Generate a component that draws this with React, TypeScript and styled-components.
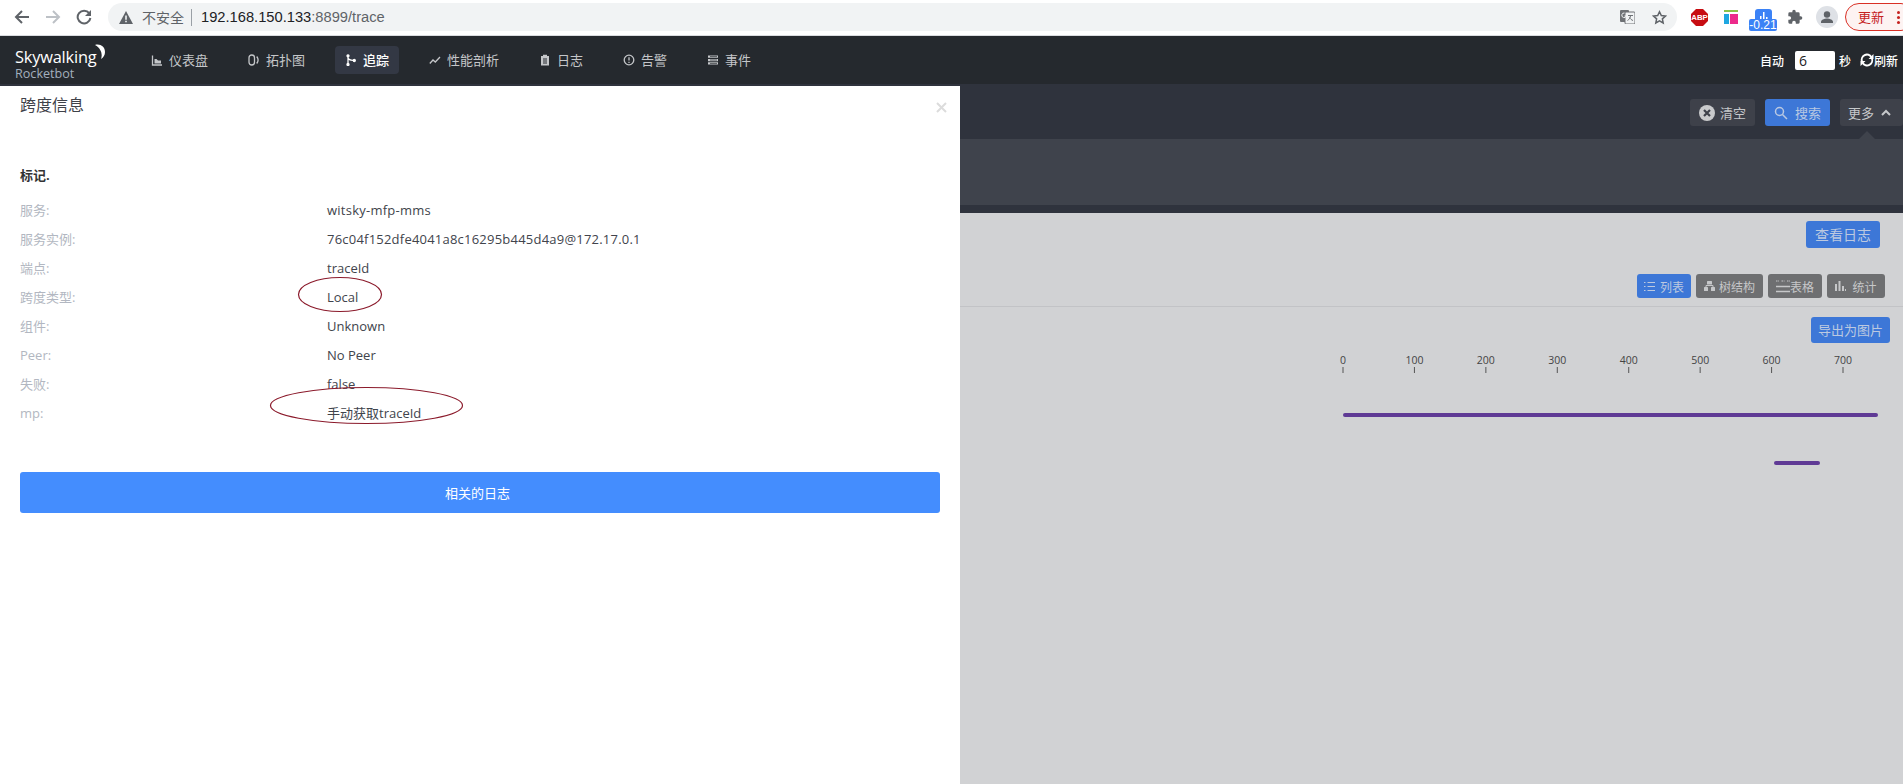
import React from "react";
import styled, { createGlobalStyle } from "styled-components";

const FONT = `"Open Sans", "Noto Sans CJK SC", sans-serif`;

const Global = createGlobalStyle`
  html, body { margin: 0; padding: 0; height: 784px; overflow: hidden; background: #d1d2d4; }
  body { font-family: ${FONT}; font-size: 13px; }
  #root { height: 784px; }
  * { box-sizing: border-box; }
`;

const Page = styled.div`
  display: flex;
  flex-direction: column;
  height: 784px;
  overflow: hidden;
`;

/* ---------- browser chrome ---------- */
const ChromeBar = styled.div`
  flex: 0 0 36px;
  height: 36px;
  display: flex;
  align-items: flex-start;
  background: #fff;
  border-bottom: 1px solid #dadce0;
  padding-top: 3px;
  overflow: hidden;
`;
const NavButtons = styled.div`
  display: flex;
  flex: none;
  width: 108px;
  height: 28px;
  align-items: center;
  padding-left: 14px;
  gap: 15px;
`;
const AddressBar = styled.div`
  flex: none;
  width: 1569px;
  height: 28px;
  background: #f1f3f4;
  border-radius: 14px;
  display: flex;
  align-items: center;
  padding-left: 11px;
  position: relative;
`;
const Insecure = styled.span`
  color: #5f6368;
  font-size: 14px;
  line-height: 28px;
  margin-left: 9px;
  font-family: "Noto Sans CJK SC", sans-serif;
`;
const AddressSep = styled.span`
  width: 1px;
  height: 17px;
  background: #9aa0a6;
  margin: 0 9px 0 7px;
`;
const Url = styled.span`
  font-family: "Liberation Sans", sans-serif;
  font-size: 14.7px;
  color: #202124;
  line-height: 28px;
`;
const UrlPath = styled.span`
  color: #5f6368;
`;
const AddressIcons = styled.div`
  margin-left: auto;
  display: flex;
  align-items: center;
  gap: 17px;
  padding-right: 10px;
`;
const Extensions = styled.div`
  flex: none;
  display: flex;
  align-items: center;
  height: 28px;
  margin-left: 6px;
`;
const Ext = styled.div`
  width: 32px;
  height: 28px;
  display: flex;
  align-items: center;
  justify-content: center;
  position: relative;
`;
const Badge = styled.span`
  position: absolute;
  left: 2px;
  top: 16px;
  width: 28px;
  height: 12px;
  background: #3b82f6;
  color: #fff;
  font-family: "Liberation Sans", sans-serif;
  font-size: 12px;
  line-height: 12px;
  text-align: center;
  border-radius: 2px;
`;
const UpdatePill = styled.div`
  margin-left: 2px;
  width: 70px;
  height: 28px;
  flex: none;
  border: 1px solid #d93025;
  border-radius: 14px;
  background: #fdf3f2;
  color: #c5221f;
  font-size: 13px;
  line-height: 26px;
  padding-left: 12px;
  position: relative;
  font-family: "Noto Sans CJK SC", sans-serif;
`;
const Dots = styled.span`
  position: absolute;
  left: 51px;
  top: 7px;
  width: 3px;
  height: 3px;
  border-radius: 50%;
  background: #c5221f;
  box-shadow: 0 5px 0 #c5221f, 0 10px 0 #c5221f;
`;

/* ---------- app nav ---------- */
const TopNav = styled.div`
  flex: 0 0 48px;
  height: 48px;
  background: #25292e;
  display: flex;
  align-items: flex-start;
  padding-top: 10px;
  color: #c8cacc;
`;
const Logo = styled.div`
  width: 141px;
  height: 38px;
  padding-left: 15px;
  margin-top: 1px;
  position: relative;
`;
const LogoTitle = styled.div`
  color: #fff;
  font-size: 16.4px;
  font-weight: 500;
  line-height: 19px;
  letter-spacing: -0.2px;
`;
const LogoSub = styled.div`
  color: #a3afbd;
  font-size: 12.6px;
  line-height: 14px;
  margin-top: 1px;
`;
const Moon = styled.svg`
  position: absolute;
  left: 94px;
  top: -3px;
`;
const NavList = styled.div`
  display: flex;
  gap: 20px;
`;
const NavItem = styled.div<{ $active?: boolean }>`
  height: 28px;
  display: flex;
  align-items: center;
  padding: 0 10px;
  gap: 6px;
  border-radius: 4px;
  font-size: 13px;
  line-height: 28px;
  color: ${(p) => (p.$active ? "#fff" : "#c4c6c9")};
  font-weight: ${(p) => (p.$active ? 500 : 400)};
  background: ${(p) => (p.$active ? "#333844" : "transparent")};
  font-family: "Noto Sans CJK SC", sans-serif;
`;
const NavRight = styled.div`
  margin-left: auto;
  height: 28px;
  display: flex;
  align-items: center;
  color: #fff;
  font-size: 12px;
  padding-right: 5px;
  margin-top: 0;
  font-family: "Noto Sans CJK SC", sans-serif;
  font-weight: 500;
`;
const IntervalInput = styled.input`
  width: 40px;
  height: 19px;
  margin: 0 4px 0 11px;
  padding: 0 4px;
  border: 0;
  border-radius: 2px;
  background: #fff;
  color: #222;
  font-family: ${FONT};
  font-size: 14px;
`;
const RefreshWrap = styled.span`
  display: flex;
  align-items: center;
  margin-left: 9px;
`;

/* ---------- main ---------- */
const Main = styled.div`
  flex: 1;
  position: relative;
  display: flex;
  flex-direction: column;
  background: #d1d2d4;
  overflow: hidden;
`;
const SubHeader = styled.div`
  flex: 0 0 55px;
  background: #2f333d;
  display: flex;
  justify-content: flex-end;
  align-items: flex-start;
  padding-top: 15px;
  gap: 10px;
  margin-right: 0;
  position: relative;
`;
const DarkButton = styled.div<{ $blue?: boolean; $w: number; $gap?: number; $pl?: number }>`
  width: ${(p) => p.$w}px;
  height: 27px;
  display: flex;
  align-items: center;
  gap: ${(p) => p.$gap ?? 5}px;
  padding-left: ${(p) => p.$pl ?? 9}px;
  border-radius: 3px;
  font-size: 13px;
  line-height: 27px;
  font-family: "Noto Sans CJK SC", sans-serif;
  background: ${(p) => (p.$blue ? "#3d77d7" : "#3e414a")};
  color: ${(p) => (p.$blue ? "#b9c8e2" : "#c6c8cb")};
`;
const Notch = styled.span`
  position: absolute;
  left: 1859px;
  top: 47px;
  width: 0;
  height: 0;
  border-left: 8px solid transparent;
  border-right: 8px solid transparent;
  border-bottom: 8px solid #3f434c;
`;
const MorePanel = styled.div`
  flex: 0 0 66px;
  background: #3f434c;
`;
const Band = styled.div`
  flex: 0 0 8px;
  background: #2f333d;
`;
const Content = styled.div`
  flex: 1;
  display: flex;
  flex-direction: column;
  align-items: flex-end;
  background: #d1d2d4;
`;
const BlueAction = styled.div<{ $w: number; $h: number; $mt: number; $mr: number; $fs: number }>`
  width: ${(p) => p.$w}px;
  height: ${(p) => p.$h}px;
  margin-top: ${(p) => p.$mt}px;
  margin-right: ${(p) => p.$mr}px;
  background: #3d77d7;
  color: #bcc9e0;
  border-radius: 3px;
  font-family: "Noto Sans CJK SC", sans-serif;
  font-size: ${(p) => p.$fs}px;
  line-height: ${(p) => p.$h}px;
  text-align: center;
`;
const ViewTabs = styled.div`
  display: flex;
  gap: 5px;
  margin-top: 26px;
  margin-right: 18px;
`;
const ViewTab = styled.div<{ $active?: boolean; $w: number; $gap: number }>`
  width: ${(p) => p.$w}px;
  height: 24px;
  border-radius: 3px;
  display: flex;
  align-items: center;
  justify-content: center;
  gap: ${(p) => p.$gap}px;
  background: ${(p) => (p.$active ? "#3d77d7" : "#6e6f71")};
  color: ${(p) => (p.$active ? "#bcc9e0" : "#c6c7c9")};
  font-size: 12px;
  font-family: "Noto Sans CJK SC", sans-serif;
`;
const Divider = styled.div`
  align-self: stretch;
  height: 1px;
  background: #c2c3c6;
  margin-top: 8px;
`;
const Chart = styled.svg`
  margin-top: 6px;
  flex: none;
`;

/* ---------- drawer ---------- */
const Drawer = styled.aside`
  position: absolute;
  left: 0;
  top: 2px;
  bottom: 0;
  width: 960px;
  background: #fff;
  padding: 6px 20px 0;
  color: #3d4048;
`;
const DrawerTitle = styled.h2`
  margin: 0;
  font-size: 16px;
  font-weight: 400;
  line-height: 24px;
  color: #3f4249;
  font-family: "Noto Sans CJK SC", sans-serif;
`;
const CloseIcon = styled.svg`
  position: absolute;
  right: 13px;
  top: 16px;
`;
const SectionTitle = styled.h3`
  margin: 49px 0 11px;
  font-size: 13px;
  font-weight: 700;
  line-height: 20px;
  color: #333;
`;
const Row = styled.div`
  display: grid;
  grid-template-columns: 307px 1fr;
  height: 29px;
  line-height: 29px;
  font-size: 13px;
`;
const RowLabel = styled.span`
  color: #b2b7c1;
`;
const RowValue = styled.span<{ $track: number }>`
  color: #41444c;
  letter-spacing: ${(p) => p.$track}px;
`;
const LogsButton = styled.div`
  margin-top: 44px;
  height: 41px;
  padding-right: 5px;
  background: #448dfe;
  border-radius: 3px;
  color: #fff;
  font-size: 13px;
  line-height: 41px;
  text-align: center;
  font-family: "Noto Sans CJK SC", sans-serif;
`;
const Circle = styled.svg<{ $left: number; $top: number }>`
  position: absolute;
  left: ${(p) => p.$left}px;
  top: ${(p) => p.$top}px;
  overflow: visible;
`;

/* ---------- icons ---------- */
const Back = () => (
  <svg width="16" height="16" viewBox="0 0 16 16" fill="none" stroke="#5f6368" strokeWidth="2">
    <path d="M15 8H2M8 2 2 8l6 6" />
  </svg>
);
const Forward = () => (
  <svg width="16" height="16" viewBox="0 0 16 16" fill="none" stroke="#bdc1c6" strokeWidth="2">
    <path d="M1 8h13M8 2l6 6-6 6" />
  </svg>
);
const Reload = () => (
  <svg width="16" height="16" viewBox="0 0 16 16" fill="none">
    <path d="M13.2 4.2A6.4 6.4 0 1 0 14.4 9" stroke="#5f6368" strokeWidth="2" />
    <path d="M15 1v6H9z" fill="#5f6368" />
  </svg>
);
const Warn = () => (
  <svg width="14" height="13" viewBox="0 0 14 13">
    <path d="M7 0 14 13H0z" fill="#5f6368" />
    <path d="M6.2 4.5h1.6v4.2H6.2zM6.2 9.7h1.6v1.5H6.2z" fill="#f1f3f4" />
  </svg>
);
const Translate = () => (
  <svg width="15" height="14" viewBox="0 0 15 14">
    <rect x="0" y="0" width="9" height="12" rx="1" fill="#6e7175" />
    <rect x="5" y="2" width="10" height="12" rx="1" fill="#f1f3f4" stroke="#6e7175" />
    <path d="M8 5.5h5M10.5 5.5c0 2-1.2 4-3 5M9.5 7.5c.8 1.4 2 2.5 3.5 3" stroke="#6e7175" fill="none" />
    <path d="M4.5 3a2.3 2.3 0 1 0 1.8 3H4.5" stroke="#f1f3f4" fill="none" />
  </svg>
);
const Star = () => (
  <svg width="15" height="15" viewBox="0 0 24 24" fill="none" stroke="#5f6368" strokeWidth="2.4">
    <path d="m12 2.8 2.9 6.1 6.6.8-4.9 4.5 1.3 6.6L12 17.500l-5.900 3.300 1.300-6.600L2.500 9.700l6.600-.8z" />
  </svg>
);
const Abp = () => (
  <svg width="17" height="17" viewBox="0 0 17 17">
    <path d="M5 0h7l5 5v7l-5 5H5l-5-5V5z" fill="#c70d12" />
    <text x="8.500" y="11.300" textAnchor="middle" fontSize="7.800" fontWeight="700" fill="#fff" fontFamily="Liberation Sans">ABP</text>
  </svg>
);
const Tile = () => (
  <svg width="15" height="15" viewBox="0 0 15 15">
    <rect x="0" y="0" width="14" height="2" fill="#8bc34a" />
    <rect x="0" y="4" width="5" height="10" fill="#1ea7e1" />
    <rect x="6" y="4" width="8" height="10" fill="#ec2a8b" />
  </svg>
);
const Analytics = () => (
  <svg width="17" height="16" viewBox="0 0 17 16">
    <path d="M3 0h11a3 3 0 0 1 3 3v13H0V3a3 3 0 0 1 3-3z" fill="#3b82f6" />
    <path d="M5 7h1.500v4H5zM8 3h1.500v8H8zM11 8h1.500v3H11z" fill="#fff" />
  </svg>
);
const Puzzle = () => (
  <svg width="16" height="16" viewBox="0 0 24 24" fill="#5f6368">
    <path d="M20.500 11H19V7a2 2 0 0 0-2-2h-4V3.500a2.500 2.500 0 0 0-5 0V5H4a2 2 0 0 0-2 2v3.800h1.500a2.700 2.700 0 0 1 0 5.400H2V20a2 2 0 0 0 2 2h3.800v-1.500a2.700 2.700 0 0 1 5.400 0V22H17a2 2 0 0 0 2-2v-4h1.500a2.500 2.500 0 0 0 0-5z" />
  </svg>
);
const Avatar = () => (
  <svg width="22" height="22" viewBox="0 0 22 22">
    <circle cx="11" cy="11" r="11" fill="#dee1e6" />
    <circle cx="11" cy="8.500" r="3.200" fill="#5f6368" />
    <path d="M5 16c0-2.200 3.600-3.400 6-3.400s6 1.200 6 3.400v1H5z" fill="#5f6368" />
  </svg>
);
const N = ({ children }: { children: React.ReactNode }) => (
  <svg width="12" height="12" viewBox="0 0 12 12" fill="none" stroke="currentColor" strokeWidth="1.300">
    {children}
  </svg>
);
const IDash = () => (
  <N>
    <path d="M1.500 1.500v9.500H11" />
    <path d="M3.500 9.500V5h2l1.500 1.500h3v3z" fill="currentColor" stroke="none" />
  </N>
);
const ITopo = () => (
  <N>
    <rect x="1" y="1" width="5.500" height="10" rx="2.700" />
    <path d="M8.700 2.500c1.600 2 1.600 5 0 7" />
  </N>
);
const ITrace = () => (
  <N>
    <path d="M3 1.500v9M3 4c.5 1.500 2 2.200 5 2.400" />
    <circle cx="3" cy="1.800" r="1" fill="currentColor" />
    <circle cx="3" cy="10.500" r="1" fill="currentColor" />
    <circle cx="9.300" cy="6.500" r="1" fill="currentColor" />
  </N>
);
const IPerf = () => (
  <N>
    <path d="M.8 9.500 4 6l2.300 2L11 3" />
  </N>
);
const ILog = () => (
  <N>
    <path d="M4 .8h4v1.200h2v9.500H2V2h2z" fill="currentColor" stroke="none" />
    <path d="M4 5h4M4 7h4M4 9h4" stroke="#25292e" strokeWidth="1" />
  </N>
);
const IAlarm = () => (
  <N>
    <circle cx="6" cy="6" r="4.800" />
    <path d="M6 3.200v3.300M6 7.800v1.200" />
  </N>
);
const IEvent = () => (
  <N>
    <path d="M1 1.500h10v2.300H1zM1 4.900h10v2.300H1zM1 8.300h10v2.300H1z" fill="currentColor" stroke="none" />
    <path d="M3 2.600h7M3 6h7M3 9.400h7" stroke="#25292e" strokeWidth=".7" />
  </N>
);
const IRefresh = () => (
  <svg width="14" height="14" viewBox="0 0 14 14" fill="none" stroke="#fff" strokeWidth="1.900">
    <path d="M2 8.500A5.200 5.200 0 0 1 11.300 4M12 5.500A5.200 5.200 0 0 1 2.700 10" />
    <path d="M13.500 1v5h-5zM.5 13V8h5z" fill="#fff" stroke="none" />
  </svg>
);
const IClear = () => (
  <svg width="16" height="16" viewBox="0 0 16 16">
    <circle cx="8" cy="8" r="8" fill="#c9cacc" />
    <path d="m5 5 6 6M11 5l-6 6" stroke="#3e414a" strokeWidth="2.200" />
  </svg>
);
const ISearch = () => (
  <svg width="14" height="14" viewBox="0 0 14 14" fill="none" stroke="#b9c8e2" strokeWidth="1.500">
    <circle cx="5.500" cy="5.500" r="4" />
    <path d="m8.500 8.500 4.500 4.500" />
  </svg>
);
const IChevron = () => (
  <svg width="10" height="7" viewBox="0 0 10 7" fill="none" stroke="#c6c8cb" strokeWidth="2">
    <path d="m1 6 4-4 4 4" />
  </svg>
);
const IList = () => (
  <svg width="11" height="11" viewBox="0 0 11 11" stroke="currentColor" strokeWidth="1.200">
    <path d="M3.500 1.500H11M3.500 5.500H11M3.500 9.500H11M0 1.500h1.500M0 5.500h1.500M0 9.500h1.500" />
  </svg>
);
const ITree = () => (
  <svg width="11" height="10" viewBox="0 0 11 10" fill="currentColor">
    <rect x="3" y="0" width="5" height="3.500" rx=".5" />
    <rect x="0" y="6" width="4" height="4" rx=".5" />
    <rect x="7" y="6" width="4" height="4" rx=".5" />
    <path d="M2 6V4.500h7V6" fill="none" stroke="currentColor" />
  </svg>
);
const ITable = () => (
  <svg width="14" height="13" viewBox="0 0 14 13" stroke="currentColor">
    <path d="M0 1h3M5.500 1h3M11 1h3" strokeDasharray="1.500 .7" />
    <path d="M0 6.500h14M0 11.500h14" strokeWidth="1.500" />
  </svg>
);
const IStat = () => (
  <svg width="11" height="10" viewBox="0 0 11 10" fill="currentColor">
    <path d="M0 3h2v7H0zM3.500 0h2v10h-2zM7 5h2v5H7zM10 8h1v2h-1z" />
  </svg>
);

const rows: [string, string, number][] = [
  ["服务:", "witsky-mfp-mms", 0.25],
  ["服务实例:", "76c04f152dfe4041a8c16295b445d4a9@172.17.0.1", 0.22],
  ["端点:", "traceId", 0],
  ["跨度类型:", "Local", 0],
  ["组件:", "Unknown", 0],
  ["Peer:", "No Peer", 0],
  ["失败:", "false", 0],
  ["mp:", "手动获取traceId", 0],
];
const navItems: [React.ReactNode, string, boolean?][] = [
  [<IDash />, "仪表盘"],
  [<ITopo />, "拓扑图"],
  [<ITrace />, "追踪", true],
  [<IPerf />, "性能剖析"],
  [<ILog />, "日志"],
  [<IAlarm />, "告警"],
  [<IEvent />, "事件"],
];
const ticks = [0, 100, 200, 300, 400, 500, 600, 700];

export default function App() {
  return (
    <Page>
      <Global />
      <ChromeBar>
        <NavButtons>
          <Back />
          <Forward />
          <Reload />
        </NavButtons>
        <AddressBar>
          <Warn />
          <Insecure>不安全</Insecure>
          <AddressSep />
          <Url>
            192.168.150.133<UrlPath>:8899/trace</UrlPath>
          </Url>
          <AddressIcons>
            <Translate />
            <Star />
          </AddressIcons>
        </AddressBar>
        <Extensions>
          <Ext>
            <Abp />
          </Ext>
          <Ext>
            <Tile />
          </Ext>
          <Ext>
            <Analytics />
            <Badge>-0.21</Badge>
          </Ext>
          <Ext>
            <Puzzle />
          </Ext>
          <Ext>
            <Avatar />
          </Ext>
        </Extensions>
        <UpdatePill>
          更新
          <Dots />
        </UpdatePill>
      </ChromeBar>

      <TopNav>
        <Logo>
          <LogoTitle>Skywalking</LogoTitle>
          <LogoSub>Rocketbot</LogoSub>
          <Moon width="14" height="16" viewBox="0 0 14 16">
            <path d="M1 1c5-1.500 10 1.500 10 7 0 3-1.500 5.500-4 7 1.500-4 1-10-6-14z" fill="#fff" />
          </Moon>
        </Logo>
        <NavList>
          {navItems.map(([icon, label, active]) => (
            <NavItem key={label} $active={active}>
              {icon}
              {label}
            </NavItem>
          ))}
        </NavList>
        <NavRight>
          自动
          <IntervalInput defaultValue="6" />秒
          <RefreshWrap>
            <IRefresh />
            刷新
          </RefreshWrap>
        </NavRight>
      </TopNav>

      <Main>
        <SubHeader>
          <DarkButton $w={65}>
            <IClear />
            清空
          </DarkButton>
          <DarkButton $w={65} $blue $gap={7}>
            <ISearch />
            搜索
          </DarkButton>
          <DarkButton $w={63} $pl={8} $gap={7}>
            更多
            <IChevron />
          </DarkButton>
          <Notch />
        </SubHeader>
        <MorePanel />
        <Band />
        <Content>
          <BlueAction $w={74} $h={27} $mt={8} $mr={23} $fs={14}>
            查看日志
          </BlueAction>
          <ViewTabs>
            <ViewTab $active $w={54} $gap={5}>
              <IList />
              列表
            </ViewTab>
            <ViewTab $w={67} $gap={4}>
              <ITree />
              树结构
            </ViewTab>
            <ViewTab $w={54} $gap={0}>
              <ITable />
              表格
            </ViewTab>
            <ViewTab $w={58} $gap={6}>
              <IStat />
              统计
            </ViewTab>
          </ViewTabs>
          <Divider />
          <BlueAction $w={79} $h={26} $mt={10} $mr={13} $fs={13}>
            导出为图片
          </BlueAction>
          <Chart width="603" height="130" viewBox="1300 349 603 130">
            {ticks.map((t, i) => {
              const x = 1343 + i * 71.43;
              return (
                <g key={t}>
                  <text x={x} y={364} textAnchor="middle" fontSize="10.500" fill="#444" fontFamily="Open Sans">
                    {t}
                  </text>
                  <line x1={x} x2={x} y1={367} y2={373} stroke="#555" />
                </g>
              );
            })}
            <rect x="1343" y="413" width="535" height="4" rx="2" fill="#5f3a95" />
            <rect x="1774" y="461" width="46" height="4" rx="2" fill="#5f3a95" />
          </Chart>
        </Content>

        <Drawer>
          <DrawerTitle>跨度信息</DrawerTitle>
          <CloseIcon width="11" height="11" viewBox="0 0 11 11" stroke="#dcdcdc" strokeWidth="2">
            <path d="m1 1 9 9M10 1l-9 9" />
          </CloseIcon>
          <SectionTitle>标记.</SectionTitle>
          {rows.map(([k, v, track]) => (
            <Row key={k}>
              <RowLabel>{k}</RowLabel>
              <RowValue $track={track}>{v}</RowValue>
            </Row>
          ))}
          <LogsButton>相关的日志</LogsButton>
          <Circle $left={298} $top={191} width="84" height="35" viewBox="0 0 84 35" fill="none" stroke="#8b1a2b" strokeWidth="1.200">
            <ellipse cx="42" cy="17.500" rx="41.500" ry="17" />
          </Circle>
          <Circle $left={270} $top={301} width="193" height="37" viewBox="0 0 193 37" fill="none" stroke="#8b1a2b" strokeWidth="1.200">
            <ellipse cx="96.500" cy="18.500" rx="96" ry="18" />
          </Circle>
        </Drawer>
      </Main>
    </Page>
  );
}
